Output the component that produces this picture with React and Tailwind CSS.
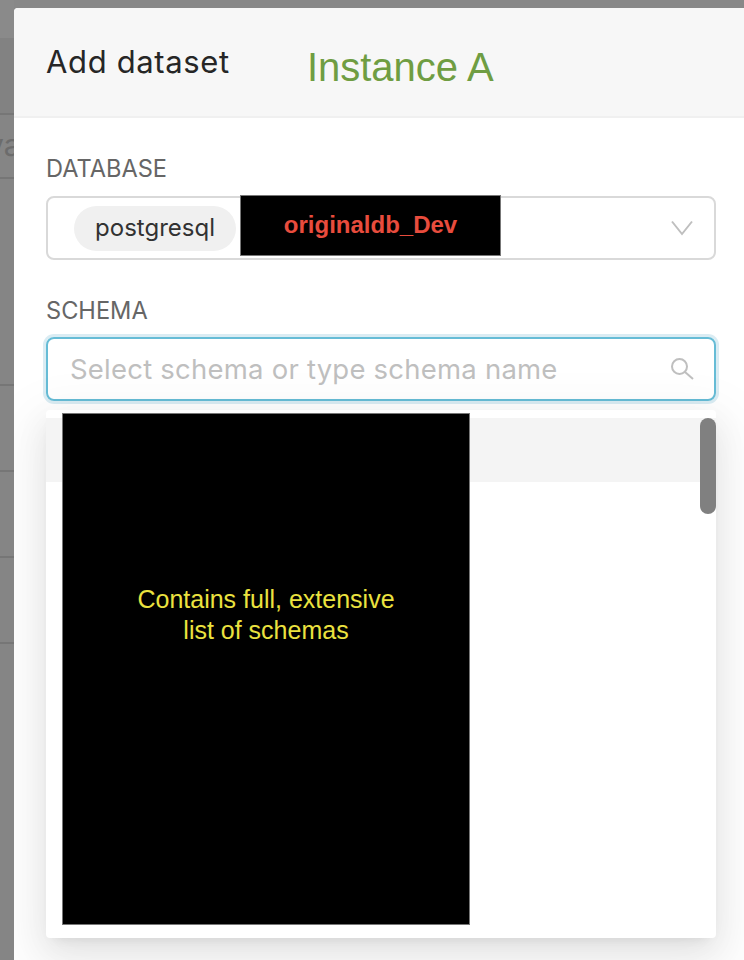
import React from "react";

const inter = "font-['Inter',sans-serif]";
const helv = "font-['Liberation_Sans',Arial,sans-serif]";

function BackdropStrip() {
  return (
    <div className="w-[14px] shrink-0 h-[960px] bg-[#858585] overflow-hidden flex flex-col">
      <div className="h-[38px] shrink-0 bg-[#8a8a8a]" />
      <div className="h-[77px] shrink-0 border-b-2 border-[#767676] bg-[#828282]" />
      <div className="h-[64px] shrink-0 border-b-2 border-[#767676] overflow-hidden">
        <span className={`${inter} block -ml-[13px] text-[30px] leading-[60px] text-[#6c6c6c] whitespace-nowrap`}>va</span>
      </div>
      <div className="h-[207px] shrink-0 border-b-2 border-[#767676]" />
      <div className="h-[86px] shrink-0 border-b-2 border-[#767676]" />
      <div className="h-[86px] shrink-0 border-b-2 border-[#767676]" />
      <div className="h-[86px] shrink-0 border-b-2 border-[#767676]" />
    </div>
  );
}

export default function App() {
  return (
    <div className="w-[744px] h-[960px] overflow-hidden flex bg-[#888888]">
      <BackdropStrip />
      <div className="flex-1 mt-2 rounded-tl-[4px] bg-white flex flex-col overflow-hidden">
        <header className="h-[110px] shrink-0 bg-[#f7f7f7] border-b-2 border-[#f0f0f0] flex items-start pl-[33px]">
          <h1 className={`${inter} text-[31px] leading-[36px] mt-[36px] text-[#262626] tracking-[0.65px] font-normal -ml-px`}>Add dataset</h1>
          <span className={`${helv} text-[40px] leading-[46px] mt-[36px] ml-[77px] text-[#6f9d42]`}>Instance A</span>
        </header>
        <div className="flex-1 pl-8 pr-7 flex flex-col">
          <label className={`${inter} mt-[37px] text-[23.6px] leading-[28px] text-[#666666]`}>DATABASE</label>
          <div className="mt-[13px] h-[64px] rounded-[8px] border-2 border-[#d9d9d9] flex items-center pl-[26px] pr-[21px]">
            <span className={`${inter} h-[45px] w-[162px] rounded-full bg-[#f0f0f0] flex items-center justify-center text-[24px] text-[#323232]`}>postgresql</span>
            <span className={`${helv} ml-[4px] h-[61px] w-[261px] bg-black border border-[#777777] flex items-center justify-center text-[24px] font-bold text-[#e84c3d] -mt-[5px] pb-[2px]`}>originaldb_Dev</span>
            <svg className="ml-auto w-[22px] h-[16px]" viewBox="0 0 22 16" fill="none" stroke="#bfbfbf" strokeWidth="2">
              <path d="M1 1.5 L11 14 L21 1.5" />
            </svg>
          </div>
          <label className={`${inter} mt-[37px] text-[23.6px] leading-[28px] text-[#666666]`}>SCHEMA</label>
          <div className="mt-[12px] h-[64px] rounded-[8px] border-2 border-[#66bcd6] ring-[3px] ring-[#daecf3] flex items-center pl-[22px] pr-[20px]">
            <span className={`${inter} mt-[2px] text-[27.5px] text-[#bfbfbf] tracking-[0.22px]`}>Select schema or type schema name</span>
            <svg className="ml-auto w-[24px] h-[24px]" viewBox="0 0 24 24" fill="none" stroke="#bfbfbf" strokeWidth="2">
              <circle cx="9.5" cy="9.5" r="7.5" />
              <path d="M15 15 L23 22" />
            </svg>
          </div>
          <div className="relative mt-[9px] h-[528px] bg-white rounded-[4px] shadow-[0_6px_12px_-8px_rgba(0,0,0,0.12),0_12px_32px_0_rgba(0,0,0,0.08),0_18px_56px_16px_rgba(0,0,0,0.05)] pt-2">
            <div className="h-[64px] bg-[#f4f4f4]" />
            <div className="absolute right-0 top-2 w-4 h-24 rounded-full bg-[#808080]" />
            <div className={`${helv} absolute left-4 top-[3px] w-[408px] h-[512px] bg-black border border-[#777777] flex items-start justify-center text-center text-[25px] leading-[31px] text-[#ebe23f] pt-[170px]`}>
              <p>Contains full, extensive<br />list of schemas</p>
            </div>
          </div>
        </div>
      </div>
    </div>
  );
}
